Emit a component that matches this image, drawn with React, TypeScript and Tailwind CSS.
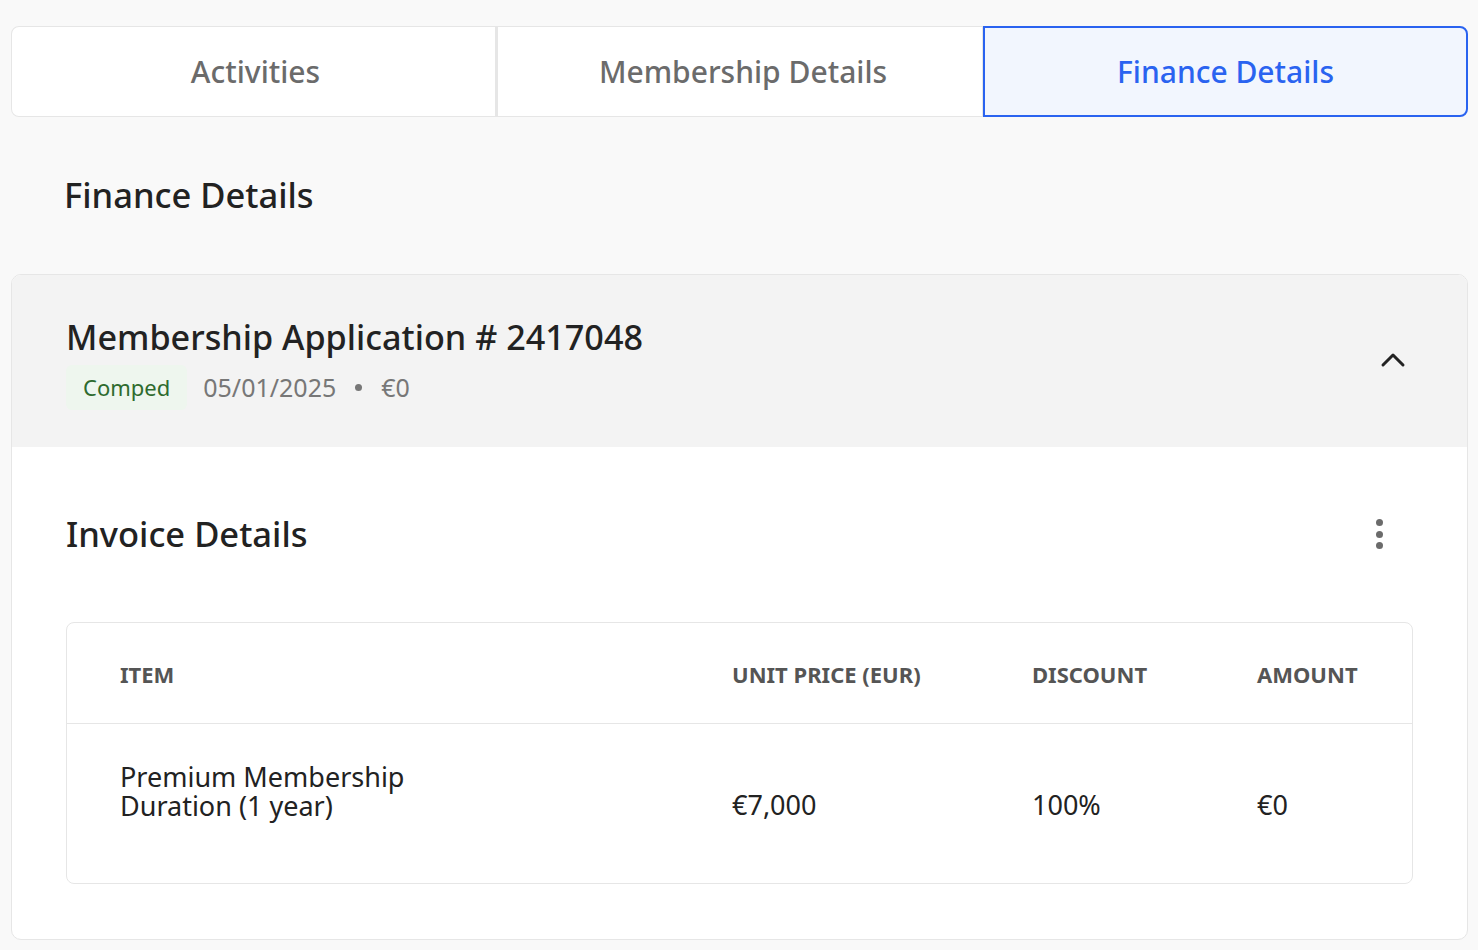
import React from "react";

const font = { fontFamily: '"Noto Sans", "Open Sans", sans-serif' };

function Tab({ label, active, first, last }: { label: string; active?: boolean; first?: boolean; last?: boolean }) {
  const base = "flex items-center justify-center text-[30px] font-medium h-full";
  if (active) {
    return (
      <div className={`${base} bg-[#f2f6fe] border-2 border-[#2a63f0] text-[#2a63f0] ${last ? "rounded-r-[8px]" : ""}`}>
        {label}
      </div>
    );
  }
  return (
    <div
      className={`${base} bg-white border border-[#e6e6e6] text-[#6b6b6b] ${first ? "rounded-l-[8px] border-r-[2px]" : ""}`}
    >
      <span className={first ? "pl-[4px]" : "pl-[6px]"}>{label}</span>
    </div>
  );
}

export default function App() {
  return (
    <div style={font} className="min-h-[950px] w-[1478px] bg-[#f9f9f9] pt-[26px] pl-[11px] pr-[10px] text-[#222]">
      {/* Tabs */}
      <div className="grid grid-cols-[486px_486px_1fr] h-[91px]">
        <Tab label="Activities" first />
        <Tab label="Membership Details" />
        <Tab label="Finance Details" active last />
      </div>

      {/* Heading */}
      <div className="pl-[53px] pt-[58px] pb-[59px]">
        <h1 className="text-[34.5px] leading-[40px] font-medium text-[#222]">Finance Details</h1>
      </div>

      {/* Card */}
      <div className="border border-[#e6e6e6] rounded-[10px] overflow-hidden bg-white">
        <div className="bg-[#f3f3f3] h-[172px] pl-[54px] pr-[61px] pt-[42px] flex justify-between">
          <div className="flex flex-col">
            <div className="text-[34.2px] leading-[40px] font-medium text-[#222]">Membership Application # 2417048</div>
            <div className="flex items-center mt-[8px]">
              <span className="bg-[#eef6ee] text-[#2e6b2e] text-[22px] h-[45px] px-[17px] flex items-center rounded-[6px]">
                Comped
              </span>
              <span className="ml-[16px] text-[25px] text-[#777]">05/01/2025</span>
              <span className="mx-[19px] w-[7px] h-[7px] rounded-full bg-[#777]"></span>
              <span className="text-[25px] text-[#777]">€0</span>
            </div>
          </div>
          <div className="pt-[33px]">
            <svg width="26" height="18" viewBox="0 0 26 18" fill="none">
              <path d="M3 15 L13 5 L23 15" stroke="#222" strokeWidth="3" strokeLinecap="round" strokeLinejoin="round" />
            </svg>
          </div>
        </div>

        <div className="pl-[54px] pr-[54px] pt-[67px] pb-[55px]">
          <div className="flex items-center justify-between">
            <h2 className="text-[34.5px] leading-[40px] font-medium text-[#222]">Invoice Details</h2>
            <div className="flex flex-col items-center gap-[4.5px] mr-[30px]">
              <span className="w-[7px] h-[7px] rounded-full bg-[#6b6b6b]"></span>
              <span className="w-[7px] h-[7px] rounded-full bg-[#6b6b6b]"></span>
              <span className="w-[7px] h-[7px] rounded-full bg-[#6b6b6b]"></span>
            </div>
          </div>

          <div className="mt-[68px] border border-[#e6e6e6] rounded-[8px]">
            <div className="grid grid-cols-[665px_300px_225px_1fr] items-center h-[101px] pt-[3px] border-b border-[#e6e6e6] text-[22px] font-bold text-[#555] uppercase">
              <div className="pl-[53px]">Item</div>
              <div>Unit Price (EUR)</div>
              <div>Discount</div>
              <div>Amount</div>
            </div>
            <div className="grid grid-cols-[665px_300px_225px_1fr] items-center h-[159px] pt-[4px] text-[27px] text-[#222]">
              <div className="pl-[53px] leading-[29px] mb-[30px]">
                Premium Membership
                <br />
                Duration (1 year)
              </div>
              <div>€7,000</div>
              <div>100%</div>
              <div>€0</div>
            </div>
          </div>
        </div>
      </div>
    </div>
  );
}
